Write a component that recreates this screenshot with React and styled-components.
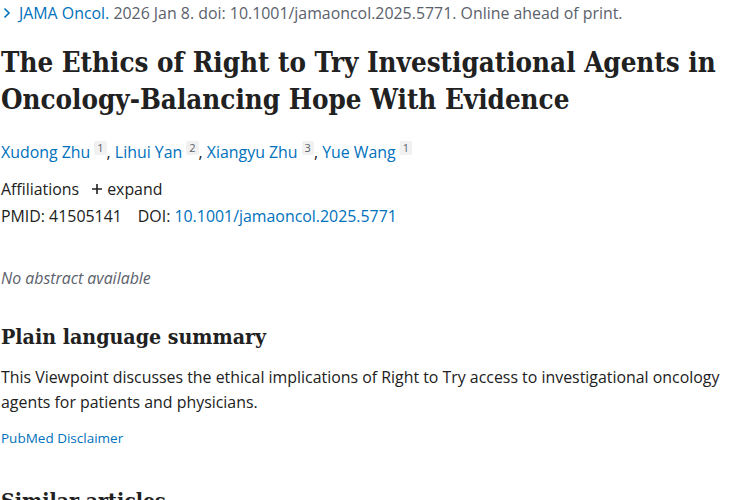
import React from 'react'
import styled, { createGlobalStyle } from 'styled-components'

const Global = createGlobalStyle`
  body {
    margin: 0;
    background: #fff;
    font-family: "Open Sans", "Noto Sans", sans-serif;
    color: #212121;
  }
`;

const Page = styled.main`
  width: 728px;
  padding: 1px 0 0 1px;
`;

const Citation = styled.div`
  display: flex;
  align-items: center;
  font-size: 15.9px;
  color: #5b616b;
  line-height: 24px;
`;

const Chevron = styled.svg`
  width: 12px;
  height: 12px;
  margin-right: 6px;
  color: #0071bc;
`;

const Link = styled.a`
  color: #0071bc;
  text-decoration: none;
`;

const serif = `"DejaVu Serif Condensed", "DejaVu Serif", "Liberation Serif", serif`;

const Title = styled.h1`
  font-family: ${serif};
  font-size: 27.5px;
  line-height: 37px;
  font-weight: 700;
  color: #212121;
  margin: 19px 0 0;
`;

const Authors = styled.div`
  margin-top: 22px;
  font-size: 15.9px;
  line-height: 24px;
`;

const Sup = styled.sup`
  display: inline-block;
  background: #f1f1f1;
  color: #5b616b;
  font-size: 11px;
  line-height: 14px;
  padding: 0 3px;
  margin: 0 0 0 4px;
  vertical-align: 6px;
  border-radius: 2px;
`;

const Row = styled.div`
  display: flex;
  align-items: center;
  font-size: 15.9px;
  line-height: 24px;
  margin-top: ${p => p.$gap || 0}px;
`;

const Expand = styled.span`
  display: inline-flex;
  align-items: center;
  margin-left: 12px;
  gap: 4px;
`;

const Label = styled.span`
  margin-right: ${p => p.$space || 0}px;
`;

const NoAbstract = styled.p`
  font-style: italic;
  color: #5b616b;
  font-size: 15.9px;
  line-height: 24px;
  margin: 38px 0 0;
`;

const Heading = styled.h2`
  font-family: ${serif};
  font-size: 21.2px;
  font-weight: 700;
  line-height: 30px;
  margin: ${p => p.$top}px 0 0;
  color: #212121;
`;

const Summary = styled.p`
  font-size: 15.9px;
  line-height: 25px;
  margin: 13px 0 0;
`;

const Disclaimer = styled(Link)`
  display: block;
  font-size: 13.5px;
  line-height: 20px;
  margin-top: 13px;
`;

export default function App() {
  return (
    <>
      <Global />
      <Page>
        <Citation>
          <Chevron viewBox="0 0 12 12" fill="none" stroke="currentColor" strokeWidth="1.6">
            <path d="M3.5 1.5 L8 6 L3.5 10.5" />
          </Chevron>
          <Link href="#">JAMA Oncol.</Link>&nbsp;2026 Jan 8. doi: 10.1001/jamaoncol.2025.5771. Online ahead of print.
        </Citation>
        <Title>The Ethics of Right to Try Investigational Agents in Oncology-Balancing Hope With Evidence</Title>
        <Authors>
          <Link href="#">Xudong Zhu</Link><Sup>1</Sup>, <Link href="#">Lihui Yan</Link><Sup>2</Sup>, <Link href="#">Xiangyu Zhu</Link><Sup>3</Sup>, <Link href="#">Yue Wang</Link><Sup>1</Sup>
        </Authors>
        <Row $gap={13}>
          Affiliations
          <Expand>
            <svg width="12" height="12" viewBox="0 0 12 12" stroke="#212121" strokeWidth="1.6">
              <path d="M6 1v10M1 6h10" />
            </svg>
            expand
          </Expand>
        </Row>
        <Row $gap={3}>
          <Label $space={16}>PMID: 41505141</Label>
          <Label>DOI:&nbsp;</Label>
          <Link href="#">10.1001/jamaoncol.2025.5771</Link>
        </Row>
        <NoAbstract>No abstract available</NoAbstract>
        <Heading $top={32}>Plain language summary</Heading>
        <Summary>This Viewpoint discusses the ethical implications of Right to Try access to investigational oncology agents for patients and physicians.</Summary>
        <Disclaimer href="#">PubMed Disclaimer</Disclaimer>
        <Heading $top={38}>Similar articles</Heading>
      </Page>
    </>
  )
}
